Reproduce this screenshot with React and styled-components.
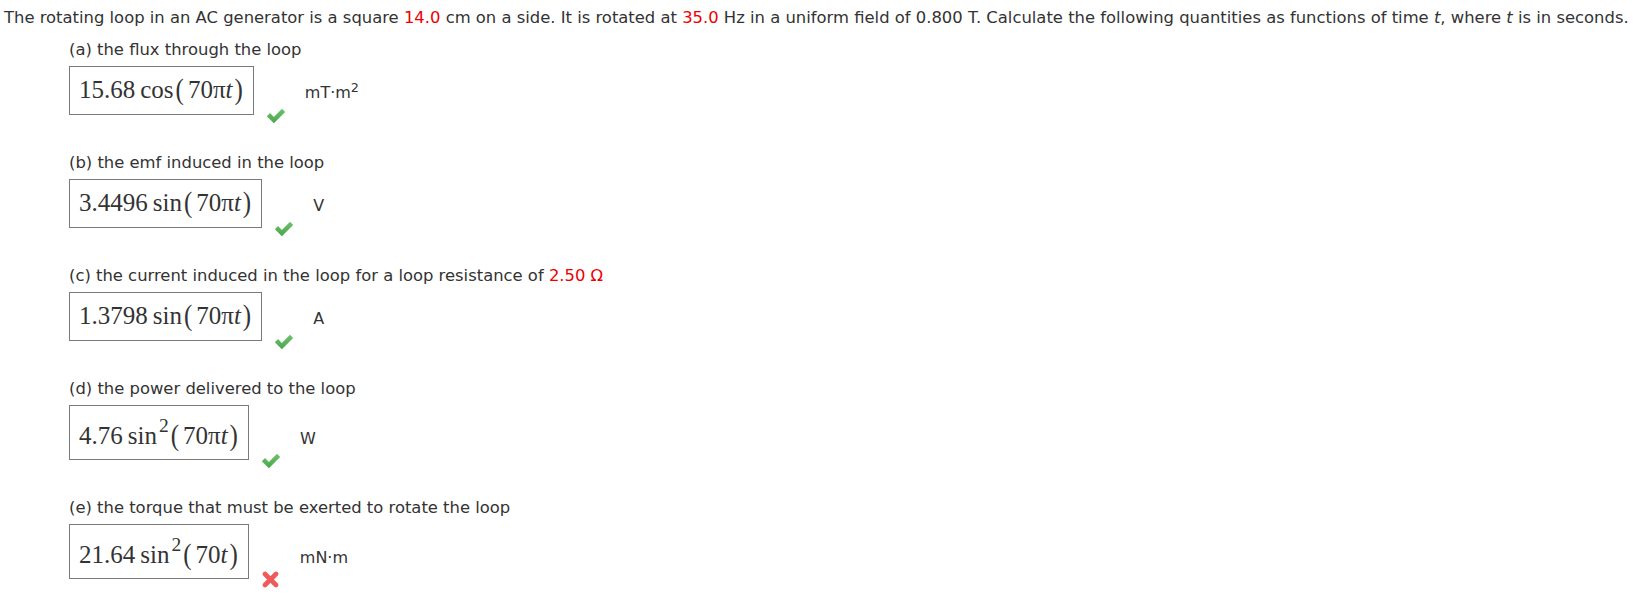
import styled, { createGlobalStyle } from "styled-components";

const GlobalStyle = createGlobalStyle`
  html, body {
    margin: 0;
    padding: 0;
    background: #fff;
  }
  body {
    font-family: "DejaVu Sans", Verdana, sans-serif;
    color: #333;
  }
`;

const Page = styled.div`
  padding: 8px 4px 0 4px;
  font-size: 16.4px;
  line-height: 20px;
`;

const Question = styled.p`
  margin: 0 0 12px;
  white-space: nowrap;
`;

const Given = styled.span`
  color: #e00;
`;

const Parts = styled.div`
  padding-left: 65px;
`;

const Part = styled.section`
  margin-bottom: 38px;
`;

const PartLabel = styled.div`
  margin-bottom: 6px;
`;

const AnswerRow = styled.div`
  display: flex;
  align-items: baseline;
`;

const AnswerBox = styled.div`
  border: 1px solid #7a7a7a;
  padding: ${(p) => (p.$tall ? "13px 10px 6px 9px" : "6px 10px 7px 9px")};
  font-family: "Liberation Serif", "Times New Roman", serif;
  font-size: 25px;
  line-height: 34px;
  color: #333;
  white-space: nowrap;
`;

const Fn = styled.span`
  margin-left: 0.2em;
`;

const Paren = styled.span`
  display: inline-block;
  transform: scaleY(1.18);
  margin: ${(p) => (p.$open ? "0 4px 0 2px" : "0 0 0 2px")};
`;

const Var = styled.i`
  font-style: italic;
`;

const Power = styled.sup`
  font-size: 0.78em;
  line-height: 0;
  vertical-align: 0.6em;
  margin-left: 2px;
`;

const Mark = styled.span`
  align-self: flex-end;
  display: flex;
  justify-content: center;
  width: 22px;
  margin-left: 11px;
  margin-bottom: -9px;
`;

const Unit = styled.span`
  margin-left: 18px;
  font-size: 16px;
  color: #333;

  sup {
    font-size: 0.8em;
    line-height: 0;
    vertical-align: 0.5em;
  }
`;

function Check() {
  return (
    <svg width="20" height="16" viewBox="0 0 18 15">
      <defs>
        <linearGradient id="chk" x1="0" y1="0" x2="0" y2="1">
          <stop offset="0" stopColor="#6cc46c" />
          <stop offset="1" stopColor="#4aa54a" />
        </linearGradient>
      </defs>
      <path
        d="M0.4 7.8 L3.4 4.8 L7 8.4 L14.6 0.8 L17.6 3.8 L7 14.4 Z"
        fill="url(#chk)"
      />
    </svg>
  );
}

function Cross() {
  return (
    <svg width="17" height="17" viewBox="0 0 17 17">
      <g stroke="#f05a5a" strokeWidth="4.6" strokeLinecap="round">
        <line x1="3" y1="3" x2="14" y2="14" />
        <line x1="14" y1="3" x2="3" y2="14" />
      </g>
    </svg>
  );
}

const parts = [
  {
    label: "(a) the flux through the loop",
    coef: "15.68",
    fn: "cos",
    arg: "70π",
    ok: true,
    unit: (
      <>
        mT·m<sup>2</sup>
      </>
    ),
  },
  {
    label: "(b) the emf induced in the loop",
    coef: "3.4496",
    fn: "sin",
    arg: "70π",
    ok: true,
    unit: "V",
  },
  {
    label: (
      <>
        (c) the current induced in the loop for a loop resistance of{" "}
        <Given>2.50 Ω</Given>
      </>
    ),
    coef: "1.3798",
    fn: "sin",
    arg: "70π",
    ok: true,
    unit: "A",
  },
  {
    label: "(d) the power delivered to the loop",
    coef: "4.76",
    fn: "sin",
    sq: true,
    arg: "70π",
    ok: true,
    unit: "W",
  },
  {
    label: "(e) the torque that must be exerted to rotate the loop",
    coef: "21.64",
    fn: "sin",
    sq: true,
    arg: "70",
    ok: false,
    unit: "mN·m",
  },
];

export default function App() {
  return (
    <>
      <GlobalStyle />
      <Page>
        <Question>
          The rotating loop in an AC generator is a square <Given>14.0</Given>{" "}
          cm on a side. It is rotated at <Given>35.0</Given> Hz in a uniform
          field of 0.800 T. Calculate the following quantities as functions of
          time <i>t</i>, where <i>t</i> is in seconds.
        </Question>
        <Parts>
          {parts.map((p, i) => (
            <Part key={i}>
              <PartLabel>{p.label}</PartLabel>
              <AnswerRow>
                <AnswerBox $tall={p.sq}>
                  {p.coef}
                  <Fn>{p.fn}</Fn>
                  {p.sq && <Power>2</Power>}
                  <Paren $open>(</Paren>
                  {p.arg}
                  <Var>t</Var>
                  <Paren>)</Paren>
                </AnswerBox>
                <Mark>{p.ok ? <Check /> : <Cross />}</Mark>
                <Unit>{p.unit}</Unit>
              </AnswerRow>
            </Part>
          ))}
        </Parts>
      </Page>
    </>
  );
}
